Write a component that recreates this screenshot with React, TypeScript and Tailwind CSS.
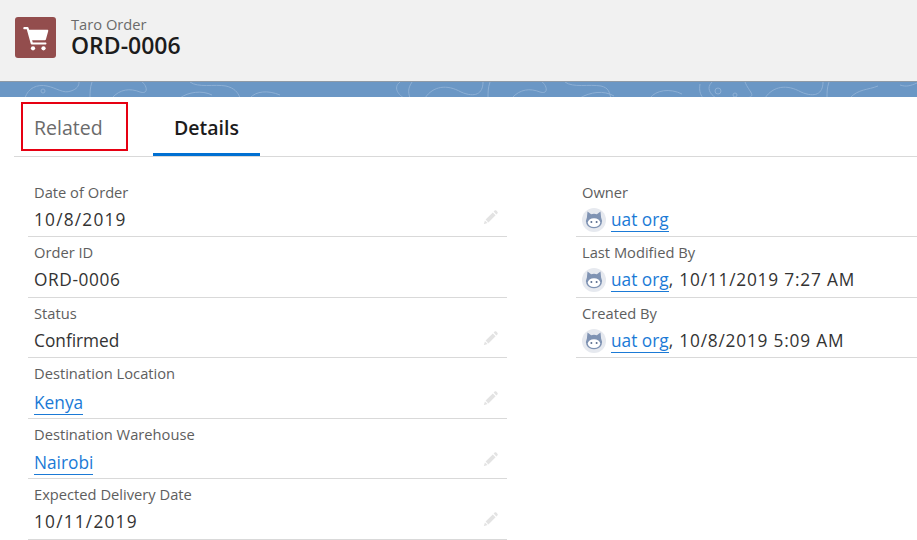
import React from "react";

function Cart() {
  return (
    <svg viewBox="0 0 24 24" className="w-[30px] h-[30px]" fill="#fff">
      <path d="M2.600 3.200h2.600c.4 0 .7.2.8.6l.5 1.600h14.600c.5 0 .9.5.7 1l-1.900 6.800c-.1.4-.4.6-.8.6H8.900l.5 1.700h10.200c.4 0 .8.4.8.8s-.4.8-.8.8H8.600c-.4 0-.7-.2-.8-.6L4.600 4.900h-2c-.4 0-.8-.4-.8-.8s.4-.9.8-.9z" />
      <circle cx="9.600" cy="20.200" r="1.700" />
      <circle cx="18" cy="20.200" r="1.700" />
    </svg>
  );
}

function Pencil() {
  return (
    <svg viewBox="0 0 16 16" className="w-[16px] h-[16px] absolute right-[8px] top-[32px]" fill="#e3e3e3">
      <path d="M11.600 1.600c.5-.5 1.200-.5 1.700 0l1.100 1.100c.5.5.5 1.200 0 1.700l-1 1-2.800-2.800 1-1zM9.800 3.400l2.800 2.800-7.200 7.200-2.800-2.800 7.200-7.200zM1.900 11.400l2.700 2.700-3.400.9c-.2 0-.3-.1-.3-.3l1-3.300z" />
    </svg>
  );
}

function Avatar() {
  return (
    <svg viewBox="0 0 24 24" className="w-[24px] h-[24px] shrink-0">
      <circle cx="12" cy="12" r="12" fill="#e6e9ef" />
      <path d="M5.500 3.500l3.600 2.800a9 9 0 0 1 5.800 0l3.600-2.800.6 6a8 8 0 0 1 .4 6.500c-1.400 3-4.600 4.200-7.500 4.200s-6.100-1.200-7.500-4.200a8 8 0 0 1 .4-6.500z" fill="#7f93b3" />
      <ellipse cx="12" cy="14.600" rx="6.200" ry="4.400" fill="#fff" />
      <circle cx="9.400" cy="14" r="1" fill="#5a6d8f" />
      <circle cx="14.600" cy="14" r="1" fill="#5a6d8f" />
    </svg>
  );
}

function Lnk({ children }: { children: React.ReactNode }) {
  return <span className="text-[#1b7ad6] border-b border-[#1b7ad6] leading-[23px] inline-block">{children}</span>;
}

function Row({ label, children, edit }: { label: string; children: React.ReactNode; edit?: boolean }) {
  return (
    <div className="relative h-[60.500px] border-b border-[#d9d9d9] pl-[6px] pt-[5px]">
      <div className="text-[14.700px] leading-[20px] text-[#5e5e5e]">{label}</div>
      <div className="text-[17.300px] leading-[24px] mt-[6px] text-[#333] flex items-center">{children}</div>
      {edit && <Pencil />}
    </div>
  );
}

function Date_({ children }: { children: React.ReactNode }) {
  return <span className="tracking-[1.200px]">{children}</span>;
}

function LeftLink({ children }: { children: React.ReactNode }) {
  return <span className="pt-[1.500px]"><Lnk>{children}</Lnk></span>;
}

function Person({ tail }: { tail?: string }) {
  return (
    <span className="flex items-center gap-[5px]">
      <Avatar />
      <span>
        <Lnk>uat org</Lnk>
        {tail && <span className="tracking-[0.800px]">{tail}</span>}
      </span>
    </span>
  );
}

export default function App() {
  return (
    <div className="w-[917px] h-[540px] overflow-hidden bg-white font-['Open_Sans','Noto_Sans',sans-serif]">
      <div className="h-[81px] bg-[#f1f1f1] flex items-center pl-[15px] gap-[15px] pb-[8px]">
        <div className="w-[41px] h-[41px] mt-[2px] rounded-[3px] bg-[#934d4d] flex items-center justify-center">
          <Cart />
        </div>
        <div>
          <div className="text-[14.700px] leading-[16px] text-[#6b6b6b]">Taro Order</div>
          <div className="text-[23px] leading-[26px] font-semibold text-[#1c1c1c]">ORD-0006</div>
        </div>
      </div>
      <div className="h-[16px] bg-[#6b97c5] border-t border-[#8f9aa6] overflow-hidden">
        <svg width="917" height="16" viewBox="0 0 917 16" fill="none" stroke="#8eb0d5" strokeWidth="1">
          <path d="M25 16c3-10 12-14 22-12 10 2 16 8 24 5 6-2 8-5 8-9M92 0c-2 6-2 10-2 16M112 16c8-9 18-10 28-6 10 3 6-8 2-10M190 0c8 6 24 2 36 4 8 2 12 6 14 12M180 16c8-6 22-8 32-3M250 16c6-7 18-8 30-3" />
          <path d="M400 0c-8 6 0 14 4 16M412 0c-4 6-4 10-2 16M425 16c8-12 22-14 36-6 14 6 22 2 22-10M490 0c-2 6-2 10-2 16M512 16c8-9 18-10 28-6 10 3 6-8 2-10M565 0c8 6 24 2 36 4 8 2 8 6 10 12M580 16c10-6 24-8 34-2M650 16c6-8 20-10 32-4M700 2c-1 6 0 10 3 14M712 0c-6 6-2 12 4 16M745 0c4 10 12 14 2 16M765 16c8-12 22-14 36-6 14 6 22 2 22-10M829 0c-2 6-2 10-2 16M850 16c8-9 18-8 28-12M900 3c6 2 10 1 17-2" />
          <circle cx="718" cy="9" r="3" />
          <circle cx="735" cy="13" r="2" />
          <circle cx="43" cy="9" r="2" />
        </svg>
      </div>
      <div className="ml-[14px] h-[60px] border-b border-[#d9d9d9] flex relative">
        <div className="mt-[5px] ml-[7px] w-[107px] h-[49px] border-2 border-[#e60012] flex items-center pl-[11px] pt-[2px] text-[19.500px] text-[#6b6b6b]">
          Related
        </div>
        <div className="ml-[25px] w-[107px] h-[59px] border-b-[3px] border-[#0070d2] flex items-center justify-center pt-[6px] text-[19.500px] font-semibold text-[#1c1c1c]">
          Details
        </div>
      </div>
      <div className="flex pt-[19.500px] pl-[28px]">
        <div className="w-[479px]">
          <Row label="Date of Order" edit><Date_>10/8/2019</Date_></Row>
          <Row label="Order ID"><span className="tracking-[0.600px]">ORD-0006</span></Row>
          <Row label="Status" edit>Confirmed</Row>
          <Row label="Destination Location" edit><LeftLink>Kenya</LeftLink></Row>
          <Row label="Destination Warehouse" edit><LeftLink>Nairobi</LeftLink></Row>
          <Row label="Expected Delivery Date" edit><Date_>10/11/2019</Date_></Row>
        </div>
        <div className="ml-[69px] flex-1">
          <Row label="Owner"><Person /></Row>
          <Row label="Last Modified By"><Person tail=", 10/11/2019 7:27 AM" /></Row>
          <Row label="Created By"><Person tail=", 10/8/2019 5:09 AM" /></Row>
        </div>
      </div>
    </div>
  );
}
